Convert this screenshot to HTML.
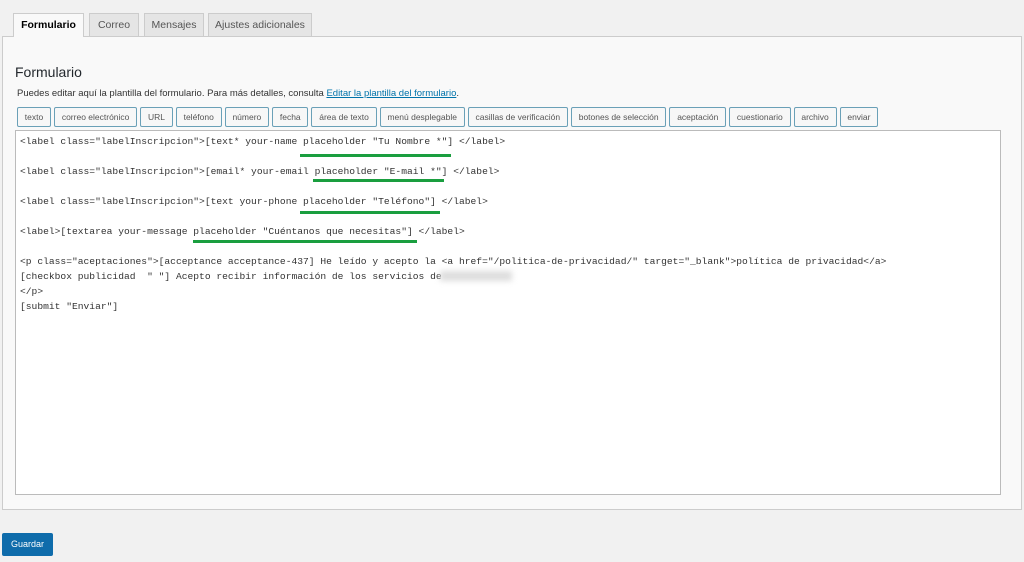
<!DOCTYPE html>
<html><head><meta charset="utf-8"><style>
body{margin:0;width:1024px;height:562px;background:#f1f1f1;font-family:"Liberation Sans",sans-serif;position:relative;overflow:hidden;color:#23282d}
.tab{position:absolute;top:13px;height:23px;border:1px solid #ccc;border-bottom:none;background:#e5e5e5;font-size:10.5px;line-height:23px;color:#555;text-align:center;box-sizing:border-box}
.tab.a{background:#f9f9f9;color:#000;font-weight:bold;height:24px}
.panel{position:absolute;left:2px;top:36px;width:1020px;height:474px;background:#f9f9f9;border:1px solid #ccc;box-sizing:border-box}
h2{position:absolute;left:15px;top:64px;margin:0;font-weight:normal;font-size:14px;color:#23282d}
.desc{position:absolute;left:17px;top:88px;font-size:9.5px;color:#333}
.desc a{color:#0073aa;text-decoration:underline}
.btns{position:absolute;left:17px;top:107px;display:flex;gap:3px}
.btns span{border:1px solid #6aa0b7;border-radius:2px;background:#f7f7f7;font-size:8.5px;color:#555;height:20px;line-height:19px;padding:0 6.8px;box-sizing:border-box}
.ta{position:absolute;left:15px;top:130px;width:986px;height:365px;background:#fff;border:1px solid #bbb;box-sizing:border-box}
pre{position:absolute;left:20px;top:134px;margin:0;font-family:"Liberation Mono",monospace;font-size:9.63px;line-height:15px;color:#333}
.g{position:absolute;height:3px;background:#1a9e3f}
.bl{position:absolute;left:440px;top:271px;width:72px;height:10px;background:#ddd;filter:blur(3px)}
.save{position:absolute;left:2px;top:533px;width:51px;height:23px;background:#0f6cab;color:#fff;font-size:9px;line-height:23px;text-align:center;border-radius:2px}
</style></head><body>
<div class="panel"></div>
<div class="tab a" style="left:13px;width:71px">Formulario</div>
<div class="tab" style="left:89px;width:50px">Correo</div>
<div class="tab" style="left:144px;width:60px">Mensajes</div>
<div class="tab" style="left:208px;width:104px">Ajustes adicionales</div>
<h2>Formulario</h2>
<div class="desc">Puedes editar aquí la plantilla del formulario. Para más detalles, consulta <a>Editar la plantilla del formulario</a>.</div>
<div class="btns"><span>texto</span><span>correo electrónico</span><span>URL</span><span>teléfono</span><span>número</span><span>fecha</span><span>área de texto</span><span>menú desplegable</span><span>casillas de verificación</span><span>botones de selección</span><span>aceptación</span><span>cuestionario</span><span>archivo</span><span>enviar</span></div>
<div class="ta"></div>
<pre>&lt;label class="labelInscripcion"&gt;[text* your-name placeholder "Tu Nombre *"] &lt;/label&gt;

&lt;label class="labelInscripcion"&gt;[email* your-email placeholder "E-mail *"] &lt;/label&gt;

&lt;label class="labelInscripcion"&gt;[text your-phone placeholder "Teléfono"] &lt;/label&gt;

&lt;label&gt;[textarea your-message placeholder "Cuéntanos que necesitas"] &lt;/label&gt;

&lt;p class="aceptaciones"&gt;[acceptance acceptance-437] He leído y acepto la &lt;a href="/politica-de-privacidad/" target="_blank"&gt;política de privacidad&lt;/a&gt;
[checkbox publicidad  " "] Acepto recibir información de los servicios de
&lt;/p&gt;
[submit "Enviar"]</pre>
<div class="bl"></div>
<div class="g" style="left:300px;top:154px;width:151px"></div>
<div class="g" style="left:313px;top:179px;width:131px"></div>
<div class="g" style="left:300px;top:211px;width:140px"></div>
<div class="g" style="left:193px;top:240px;width:224px"></div>
<div class="save">Guardar</div>
</body></html>
